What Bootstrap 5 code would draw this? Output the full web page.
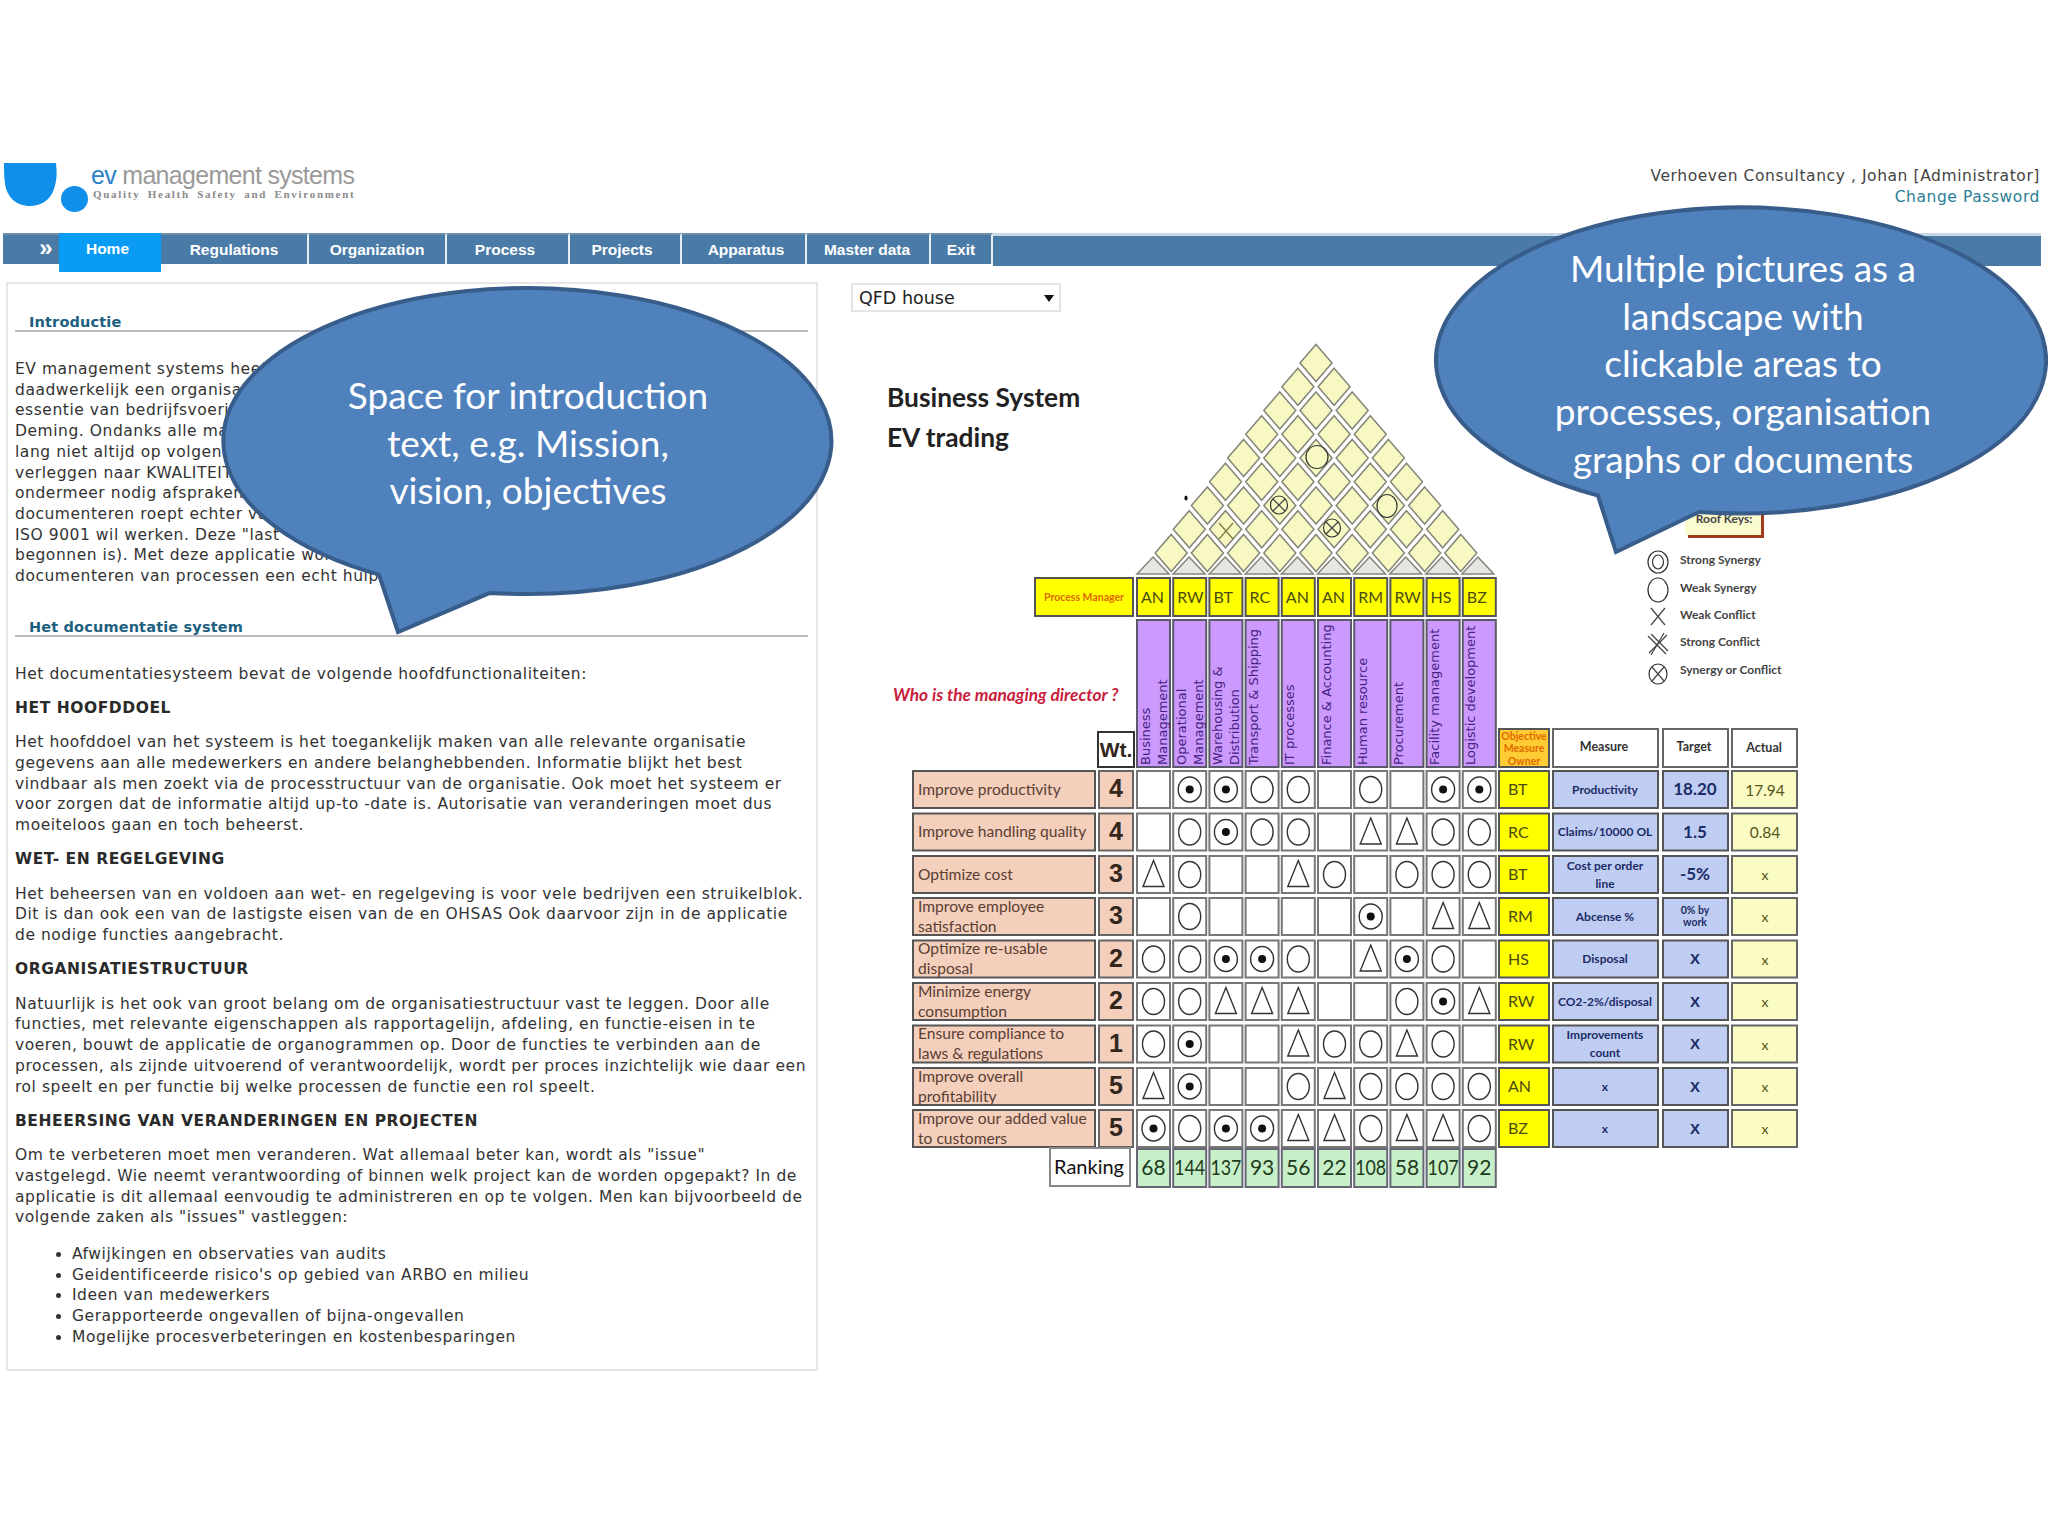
<!DOCTYPE html>
<html lang="nl">
<head>
    <meta charset="UTF-8">
    <title>EV management systems</title>
    <meta name="viewport" content="width=device-width, initial-scale=1">
    <link href="https://cdn.jsdelivr.net/npm/bootstrap@5.3.0/dist/css/bootstrap.min.css" rel="stylesheet">
    <style>
        body { background: #fff; font-family: "DejaVu Sans", sans-serif; font-size: 15.5px; color: #333; overflow-x: hidden; padding-top: 160px; }
        .page-head { height: 73px; padding: 3px 8px 0 4px; }
        .logo-name { font-family: "Liberation Sans", sans-serif; font-size: 25px; letter-spacing: -.7px; line-height: 24px; color: #9a9a9a; margin-top: 0; }
        .logo-name span { color: #2b82c4; }
        .logo-sub { font-family: "Liberation Serif", serif; font-weight: 700; font-size: 11px; letter-spacing: 1.7px; word-spacing: 3px; color: #8a8a8a; line-height: 14px; padding-left: 2px; }
        .user-box { line-height: 21px; color: #444; padding-top: 3px; letter-spacing: .58px; }
        .user-box a { color: #2a7f96; text-decoration: none; }

        .menu-strip { margin: 0 7px 0 3px; height: 39px; }
        .menu-tab { height: 31px; background: #4a7ba7; border-top: 2px solid #6d8ea5; border-right: 2px solid #e6eef4; color: #fff; font-family: "Liberation Sans", sans-serif; font-weight: 700; font-size: 15.5px; line-height: 29px; text-align: center; text-decoration: none; }
        .menu-tab.active-tab { height: 39px; background: #0a9bf5; border-top-color: #0a9bf5; border-right: 0; line-height: 27px; }
        .menu-tab:nth-child(1) { width: 56px; padding-left: 30px; font-size: 24px; line-height: 25px; border-right: 0; }
        .menu-tab:nth-child(2) { width: 102px; padding-right: 5px; }
        .menu-tab:nth-child(3) { width: 148px; }
        .menu-tab:nth-child(4) { width: 138px; }
        .menu-tab:nth-child(5) { width: 123px; padding-right: 5px; }
        .menu-tab:nth-child(6) { width: 112px; padding-right: 6px; }
        .menu-tab:nth-child(7) { width: 125px; padding-left: 5px; }
        .menu-tab:nth-child(8) { width: 124px; padding-right: 2px; }
        .menu-tab:nth-child(9) { width: 62px; }
        .menu-fill { height: 33px; background: #4a7ba7; border-top: 3px solid #c9d8e4; }

        .page-main { margin-top: 10px; padding-left: 6px; }
        .intro-panel { width: 812px; height: 1089px; border: 2px solid #e6e6e6; padding: 0 8px 0 7px; line-height: 20.7px; white-space: nowrap; flex: none; letter-spacing: .55px; }
        .intro-panel p { margin: 0 0 13.6px; }
        .intro-panel ul { padding-left: 57px; margin: 16px 0 0; }
        .sec-title { font-size: 14.5px; font-weight: 700; color: #1d5f80; line-height: 16px; letter-spacing: .15px; padding-left: 14px; margin: 30px 0 27px; border-bottom: 2px solid #bdbdbd; height: 18px; }
        .sec-title.next-title { margin-top: 32px; }
        .sub-head { font-weight: 700; color: #2a2a2a; }

        .picture-col { margin-left: 33px; padding-top: 1px; }
        .pick-wrap { width: 210px; height: 29px; position: relative; }
        .pick-wrap .form-select { height: 29px; padding: 0 0 0 6px; border: 2px solid #e4e4e4; border-radius: 0; background-image: none; font-size: 17.5px; color: #222; }
        .pick-wrap::after { content: ""; position: absolute; right: 7px; top: 12px; border: 5px solid transparent; border-top: 7px solid #111; border-bottom: 0; }
        .qfd-pic { display: block; margin-top: 18px; }

        .callout { position: absolute; color: #fff; font-family: Lato, sans-serif; font-size: 37px; line-height: 47.7px; text-align: center; }
        .callout svg { position: absolute; left: 0; top: 0; }
        .callout p { position: relative; margin: 0; }
        .callout-a { left: 218px; top: 281px; width: 620px; height: 356px; }
        .callout-a p { padding-top: 90px; }
        .callout-b { left: 1434px; top: 202px; width: 614px; height: 355px; }
        .callout-b p { padding: 42px 0 0 4px; }

        .qfd-pic text { font-family: Lato, sans-serif; fill: #4a3a2e; }
        .qfd-pic .t-title { font-weight: 700; font-size: 26.3px; fill: #222; }
        .qfd-pic .t-who { font-weight: 700; font-style: italic; font-size: 17.3px; fill: #c8203c; }
        .qfd-pic .t-pm { font-weight: 700; font-size: 10.5px; fill: #e06a00; }
        .qfd-pic .t-own { font-size: 16px; fill: #4b4b10; }
        .qfd-pic .t-purple { font-family: "DejaVu Sans", sans-serif; font-size: 13px; fill: #45237e; }
        .qfd-pic .t-obj { font-size: 15.6px; fill: #5a4033; }
        .qfd-pic .t-wt { font-family: "Liberation Sans", sans-serif; font-weight: 700; font-size: 21px; fill: #33261c; }
        .qfd-pic .t-num { font-family: "Liberation Sans", sans-serif; font-weight: 700; font-size: 25px; fill: #33261c; }
        .qfd-pic .t-head { font-weight: 700; font-size: 12.5px; fill: #333; }
        .qfd-pic .t-objhead { font-weight: 700; font-size: 10.5px; fill: #e26a00; }
        .qfd-pic .t-meas { font-weight: 700; font-size: 12px; fill: #1c2c66; }
        .qfd-pic .t-target { font-weight: 700; font-size: 17px; fill: #1c2c66; }
        .qfd-pic .t-cross { font-family: "Liberation Sans", sans-serif; font-weight: 700; font-size: 15px; fill: #1c2c66; }
        .qfd-pic .t-small { font-weight: 700; font-size: 10.5px; fill: #1c2c66; }
        .qfd-pic .t-actual { font-size: 15.5px; fill: #55551c; }
        .qfd-pic .t-x { font-size: 14px; fill: #55551c; }
        .qfd-pic .t-rank { font-size: 21px; fill: #1d3a1d; }
        .qfd-pic .t-ranking { font-size: 20px; fill: #111; }
        .qfd-pic .t-key { font-weight: 700; font-size: 12px; fill: #444; }
    </style>
</head>
<body>
<div class="page-head d-flex justify-content-between">
    <div class="d-flex">
        <svg width="87" height="50" viewBox="4 164 87 50" class="flex-none">
            <path d="M4 164H56C57 175 57 180 54 190C50 202 40 207 30 207C16 207 7 198 5 185C4 178 4 170 4 164Z" fill="#0f8fea"/>
            <ellipse cx="74.5" cy="200" rx="13.5" ry="13" fill="#0f8fea"/>
        </svg>
        <div>
            <div class="logo-name"><span>ev</span> management systems</div>
            <div class="logo-sub">Quality Health Safety and Environment</div>
        </div>
    </div>
    <div class="user-box text-end">
        Verhoeven Consultancy , Johan [Administrator]<br>
        <a href="#">Change Password</a>
    </div>
</div>

<div class="menu-strip d-flex align-items-start">
    <a class="menu-tab" href="#">»</a>
    <a class="menu-tab active-tab" href="#">Home</a>
    <a class="menu-tab" href="#">Regulations</a>
    <a class="menu-tab" href="#">Organization</a>
    <a class="menu-tab" href="#">Process</a>
    <a class="menu-tab" href="#">Projects</a>
    <a class="menu-tab" href="#">Apparatus</a>
    <a class="menu-tab" href="#">Master data</a>
    <a class="menu-tab" href="#">Exit</a>
    <div class="menu-fill flex-grow-1"></div>
</div>

<div class="page-main d-flex align-items-start">
    <div class="intro-panel">
        <div class="sec-title">Introductie</div>
        <p>EV management systems heeft<br>
            daadwerkelijk een organisatie<br>
            essentie van bedrijfsvoering<br>
            Deming. Ondanks alle maar<br>
            lang niet altijd op volgens<br>
            verleggen naar KWALITEIT<br>
            ondermeer nodig afspraken<br>
            documenteren roept echter van<br>
            ISO 9001 wil werken. Deze "last<br>
            begonnen is). Met deze applicatie wordt<br>
            documenteren van processen een echt hulpmiddel</p>
        <div class="sec-title next-title">Het documentatie system</div>
        <p>Het documentatiesysteem bevat de volgende hoofdfunctionaliteiten:</p>
        <p class="sub-head">HET HOOFDDOEL</p>
        <p>Het hoofddoel van het systeem is het toegankelijk maken van alle relevante organisatie<br>
            gegevens aan alle medewerkers en andere belanghebbenden. Informatie blijkt het best<br>
            vindbaar als men zoekt via de processtructuur van de organisatie. Ook moet het systeem er<br>
            voor zorgen dat de informatie altijd up-to -date is. Autorisatie van veranderingen moet dus<br>
            moeiteloos gaan en toch beheerst.</p>
        <p class="sub-head">WET- EN REGELGEVING</p>
        <p>Het beheersen van en voldoen aan wet- en regelgeving is voor vele bedrijven een struikelblok.<br>
            Dit is dan ook een van de lastigste eisen van de en OHSAS Ook daarvoor zijn in de applicatie<br>
            de nodige functies aangebracht.</p>
        <p class="sub-head">ORGANISATIESTRUCTUUR</p>
        <p>Natuurlijk is het ook van groot belang om de organisatiestructuur vast te leggen. Door alle<br>
            functies, met relevante eigenschappen als rapportagelijn, afdeling, en functie-eisen in te<br>
            voeren, bouwt de applicatie de organogrammen op. Door de functies te verbinden aan de<br>
            processen, als zijnde uitvoerend of verantwoordelijk, wordt per proces inzichtelijk wie daar een<br>
            rol speelt en per functie bij welke processen de functie een rol speelt.</p>
        <p class="sub-head">BEHEERSING VAN VERANDERINGEN EN PROJECTEN</p>
        <p>Om te verbeteren moet men veranderen. Wat allemaal beter kan, wordt als "issue"<br>
            vastgelegd. Wie neemt verantwoording of binnen welk project kan de worden opgepakt? In de<br>
            applicatie is dit allemaal eenvoudig te administreren en op te volgen. Men kan bijvoorbeeld de<br>
            volgende zaken als "issues" vastleggen:</p>
        <ul>
            <li>Afwijkingen en observaties van audits</li>
            <li>Geidentificeerde risico's op gebied van ARBO en milieu</li>
            <li>Ideen van medewerkers</li>
            <li>Gerapporteerde ongevallen of bijna-ongevallen</li>
            <li>Mogelijke procesverbeteringen en kostenbesparingen</li>
        </ul>
    </div>

    <div class="picture-col">
        <div class="pick-wrap">
            <select class="form-select"><option>QFD house</option></select>
        </div>
        <svg id="qfd" class="qfd-pic" width="1000" height="880" viewBox="851 330 1000 880"></svg>
    </div>
</div>

<div class="callout callout-a">
    <svg width="620" height="356" viewBox="218 281 620 356">
        <path d="M379 574.6A304 153 0 1 1 490 592.9L398 632Z" fill="#4f81bd" stroke="#385d8a" stroke-width="4"/>
    </svg>
    <p>Space for introduction<br>text, e.g. Mission,<br>vision, objectives</p>
</div>
<div class="callout callout-b">
    <svg width="614" height="355" viewBox="1434 202 614 355">
        <path d="M1598 495.6A305 153 0 1 1 1699 512L1616 552Z" fill="#4f81bd" stroke="#385d8a" stroke-width="4"/>
    </svg>
    <p>Multiple pictures as a<br>landscape with<br>clickable areas to<br>processes, organisation<br>graphs or documents</p>
</div>

<script>
    const colX = i => 1137 + 36.2 * i;
    const rowY = [771, 813.5, 856, 898, 940.5, 983, 1025.5, 1068, 1110];
    const grey = "#666";
    let out = "";

    function box(x, y, w, h, fill, stroke = grey, sw = 2) {
        out += `<rect x="${x}" y="${y}" width="${w}" height="${h}" fill="${fill}" stroke="${stroke}" stroke-width="${sw}"/>`;
    }
    function txt(x, y, str, cls, anchor = "middle", extra = "") {
        out += `<text x="${x}" y="${y}" dy=".35em" text-anchor="${anchor}" class="${cls}" ${extra}>${str}</text>`;
    }
    function ring(x, y, rx, ry, sw = 1.4) {
        out += `<ellipse cx="${x}" cy="${y}" rx="${rx}" ry="${ry}" fill="none" stroke="#333" stroke-width="${sw}"/>`;
    }
    function line(x1, y1, x2, y2, color = "#444") {
        out += `<line x1="${x1}" y1="${y1}" x2="${x2}" y2="${y2}" stroke="${color}" stroke-width="1.2"/>`;
    }
    function symbol(kind, x, y) {
        if (kind === "O") ring(x, y, 11, 13);
        if (kind === "D") {
            ring(x, y, 11.5, 12.5);
            out += `<circle cx="${x}" cy="${y}" r="4" fill="#111"/>`;
        }
        if (kind === "T") out += `<path d="M${x} ${y - 14}L${x + 10.5} ${y + 12}H${x - 10.5}Z" fill="none" stroke="#333" stroke-width="1.4"/>`;
    }

    // roof
    for (let k = 0; k < 9; k++) {
        for (let i = 0; i <= k; i++) {
            const x = 1316 + (i - k / 2) * 36.2, y = 363 + 23.75 * k;
            out += `<path d="M${x} ${y - 18.5}L${x + 16} ${y}L${x} ${y + 18.5}L${x - 16} ${y}Z" fill="#f8f8c2" stroke="#85857a" stroke-width="1.5"/>`;
        }
    }
    for (let i = 0; i < 10; i++) {
        const x = 1153 + 36.1 * i;
        out += `<path d="M${x} 557L${x + 16} 574H${x - 16}Z" fill="#e6e6e2" stroke="#85857a" stroke-width="1.5"/>`;
    }
    ring(1317, 457, 11, 11.5, 1.2);
    ring(1387, 506, 10, 11.5, 1.2);
    [[1279, 505], [1332, 528]].forEach(([x, y]) => {
        ring(x, y, 8.5, 9, 1.2);
        line(x - 6, y - 6, x + 6, y + 6);
        line(x + 6, y - 6, x - 6, y + 6);
    });
    line(1219, 523, 1233, 539, "#77773a");
    line(1233, 523, 1219, 539, "#77773a");
    out += `<ellipse cx="1186" cy="498" rx="1.6" ry="2.6" fill="#111"/>`;

    // titles
    txt(887, 398, "Business System", "t-title", "start");
    txt(887, 438, "EV trading", "t-title", "start");
    txt(893, 695, "Who is the managing director ?", "t-who", "start");

    // process manager row and purple headers
    box(1035, 578, 98, 38, "#ffff00", "#555");
    txt(1084, 597, "Process Manager", "t-pm");
    const managers = ["AN", "RW", "BT", "RC", "AN", "AN", "RM", "RW", "HS", "BZ"];
    managers.forEach((m, i) => {
        box(colX(i), 578, 33, 38, "#ffff00", "#555");
        txt(colX(i) + 4, 597, m, "t-own", "start");
    });
    const heads = [
        ["Business", "Management"], ["Operational", "Management"], ["Warehousing &amp;", "Distribution"],
        ["Transport &amp; Shipping"], ["IT processes"], ["Finance &amp; Accounting"], ["Human resource"],
        ["Procurement"], ["Facility management"], ["Logistic development"]
    ];
    heads.forEach((h, i) => {
        box(colX(i), 620, 33, 147, "#cc99ff", "#5a5a6a");
        const xs = h.length === 2 ? [8, 25] : [8];
        h.forEach((s, j) => {
            const x = colX(i) + xs[j];
            out += `<text transform="translate(${x} 765) rotate(-90)" dy=".35em" class="t-purple">${s}</text>`;
        });
    });

    // column headers
    box(1098, 732, 36, 35, "#fff", "#333");
    txt(1116, 750, "Wt.", "t-wt");
    box(1499, 729, 50, 38, "#ffcc33", "#555");
    txt(1524, 736, "Objective", "t-objhead");
    txt(1524, 748, "Measure", "t-objhead");
    txt(1524, 761, "Owner", "t-objhead");
    box(1553, 729, 105, 38, "#fff");
    txt(1604, 747, "Measure", "t-head");
    box(1663, 729, 65, 38, "#fff");
    txt(1694, 747, "Target", "t-head");
    box(1732, 729, 65, 38, "#fff");
    txt(1764, 748, "Actual", "t-head");

    // matrix rows
    const rows = [
        { o: ["Improve productivity"], w: 4, m: "_DDOO_O_DD", own: "BT", me: ["Productivity"], t: "18.20", a: "17.94" },
        { o: ["Improve handling quality"], w: 4, m: "_ODOO_TTOO", own: "RC", me: ["Claims/10000 OL"], t: "1.5", a: "0.84" },
        { o: ["Optimize cost"], w: 3, m: "TO__TO_OOO", own: "BT", me: ["Cost per order", "line"], t: "-5%", a: "x" },
        { o: ["Improve employee", "satisfaction"], w: 3, m: "_O____D_TT", own: "RM", me: ["Abcense %"], t: ["0% by", "work"], a: "x" },
        { o: ["Optimize re-usable", "disposal"], w: 2, m: "OODDO_TDO_", own: "HS", me: ["Disposal"], t: "X", a: "x" },
        { o: ["Minimize energy", "consumption"], w: 2, m: "OOTTT__ODT", own: "RW", me: ["CO2-2%/disposal"], t: "X", a: "x" },
        { o: ["Ensure compliance to", "laws &amp; regulations"], w: 1, m: "OD__TOOTO_", own: "RW", me: ["Improvements", "count"], t: "X", a: "x" },
        { o: ["Improve overall", "profitability"], w: 5, m: "TD__OTOOOO", own: "AN", me: ["x"], t: "X", a: "x" },
        { o: ["Improve our added value", "to customers"], w: 5, m: "DODDTTOTTO", own: "BZ", me: ["x"], t: "X", a: "x" }
    ];
    rows.forEach((r, n) => {
        const y = rowY[n], mid = y + 18.5;
        box(913, y, 182, 37, "#f4cfbc", "#555");
        if (r.o.length === 1) txt(918, mid, r.o[0], "t-obj", "start");
        else {
            txt(918, mid - 10, r.o[0], "t-obj", "start");
            txt(918, mid + 10, r.o[1], "t-obj", "start");
        }
        box(1099, y, 34, 37, "#f4cfbc", grey);
        txt(1116, mid - 1, r.w, "t-num");
        [...r.m].forEach((k, i) => {
            box(colX(i), y, 33, 37, "#fff", "#777");
            symbol(k, colX(i) + 16.5, mid);
        });
        box(1499, y, 50, 37, "#ffff00", "#555");
        txt(1508, mid, r.own, "t-own", "start");
        box(1553, y, 105, 37, "#bfcdf2", "#555");
        if (r.me.length === 1) txt(1605, mid, r.me[0], "t-meas");
        else {
            txt(1605, mid - 9, r.me[0], "t-meas");
            txt(1605, mid + 9, r.me[1], "t-meas");
        }
        box(1663, y, 65, 37, "#bfcdf2", "#555");
        if (Array.isArray(r.t)) {
            txt(1695, mid - 6, r.t[0], "t-small");
            txt(1695, mid + 6, r.t[1], "t-small");
        } else txt(1695, mid, r.t, r.t === "X" ? "t-cross" : "t-target");
        box(1732, y, 65, 37, "#fbfbc4", "#666");
        txt(1765, mid + 1, r.a, r.a === "x" ? "t-x" : "t-actual");
    });

    // ranking
    box(1050, 1148, 80, 38, "#fff", "#888");
    txt(1089, 1167, "Ranking", "t-ranking");
    [68, 144, 137, 93, 56, 22, 108, 58, 107, 92].forEach((v, i) => {
        box(colX(i), 1149, 33, 38, "#c8f0c8", "#667");
        const squeeze = v > 99 ? 'textLength="31" lengthAdjust="spacingAndGlyphs"' : "";
        txt(colX(i) + 16.5, 1168, v, "t-rank", "middle", squeeze);
    });

    // roof keys, the bubble hides the top of this box
    out += `<rect x="1688" y="503" width="76" height="35" fill="#a03c1c"/><rect x="1685" y="500" width="76" height="35" fill="#fbfbd0"/>`;
    txt(1724, 519, "Roof Keys:", "t-key");
    const keyX = 1658;
    ring(keyX, 562, 10, 11, 1.2); ring(keyX, 562, 5.5, 7, 1.2);
    ring(keyX, 590, 10, 12, 1.2);
    line(keyX - 7, 608, keyX + 7, 625);
    line(keyX + 7, 608, keyX - 7, 625);
    line(keyX - 10, 636, keyX + 8, 654); line(keyX - 7, 634, keyX + 10, 651);
    line(keyX + 9, 635, keyX - 9, 653); line(keyX + 6, 633, keyX - 7, 655);
    ring(keyX, 674, 9, 10, 1.2);
    line(keyX - 6, 667, keyX + 6, 681);
    line(keyX + 6, 667, keyX - 6, 681);
    ["Strong Synergy", "Weak Synergy", "Weak Conflict", "Strong Conflict", "Synergy or Conflict"].forEach((s, i) => {
        txt(1680, [560, 588, 615, 642, 670][i], s, "t-key", "start");
    });

    document.getElementById("qfd").innerHTML = out;
</script>
<script src="https://cdn.jsdelivr.net/npm/bootstrap@5.3.0/dist/js/bootstrap.bundle.min.js"></script>
</body>
</html>
